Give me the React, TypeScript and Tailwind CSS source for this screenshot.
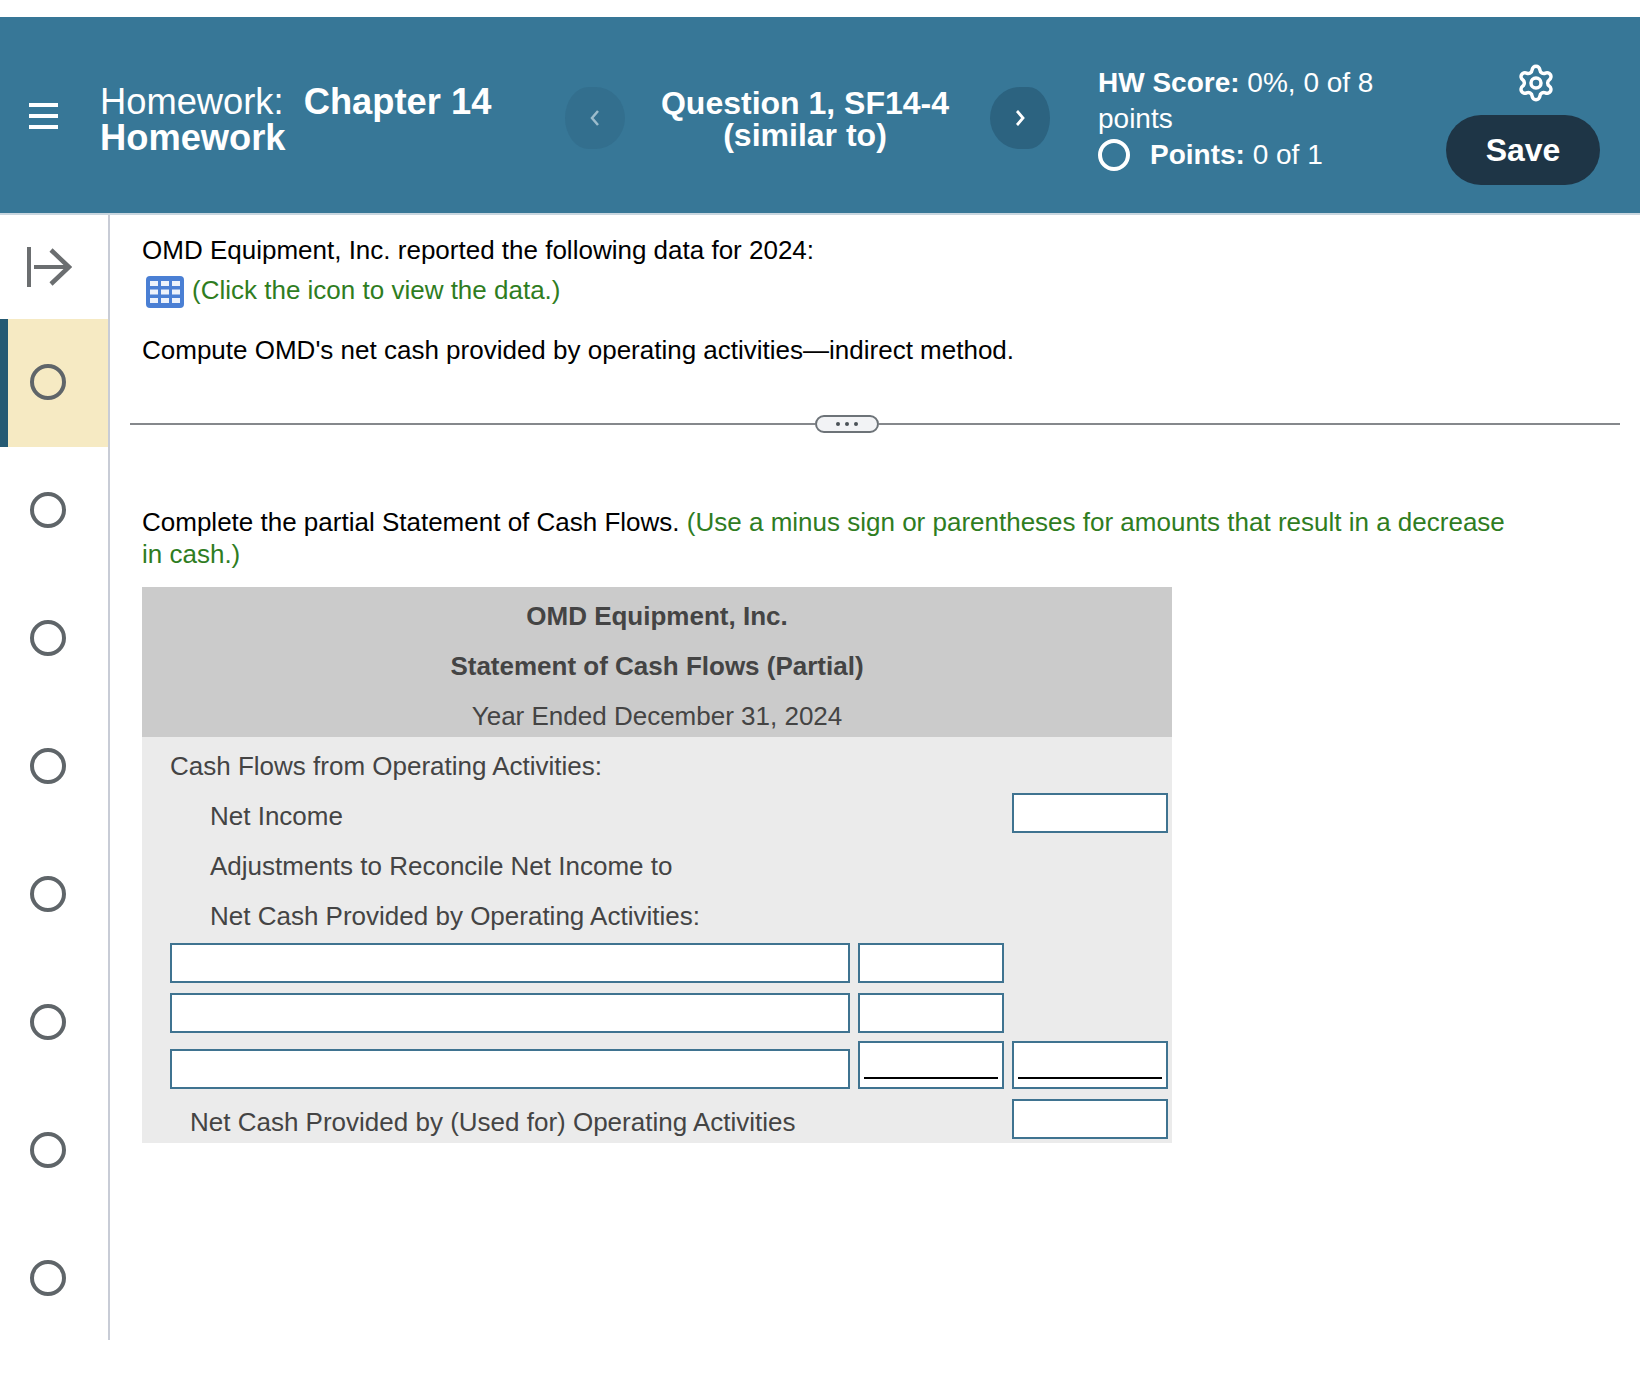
import { Settings } from "lucide-react";

const fontClass = "font-['Liberation_Sans',Arial,sans-serif]";

function Circle() {
  return <div className="mb-[2px] h-[36px] w-[36px] rounded-full border-[4px] border-[#5f6569]" />;
}

function Box({ className }: { className: string }) {
  return <div className={`box-border border-2 border-[#3f7390] bg-white ${className}`} />;
}

function UnderlinedBox({ className }: { className: string }) {
  return (
    <div className={`box-border flex h-[48px] items-end border-2 border-[#3f7390] bg-white px-[4px] pb-[8px] ${className}`}>
      <div className="h-[2px] w-full bg-black" />
    </div>
  );
}

function TableLine({ text, indent }: { text: string; indent: string }) {
  return <div className={`flex h-[50px] items-center ${indent}`}>{text}</div>;
}

export default function App() {
  return (
    <div className={`min-h-[1384px] bg-white pt-[17px] ${fontClass}`}>
      <header className="flex h-[198px] items-start border-b-2 border-[#c9d6df] bg-[#377797] text-white">
        <div className="mt-[86px] flex w-[100px] justify-start pl-[29px]">
          <div className="flex w-[29px] flex-col gap-[7px]">
            <div className="h-[4px] bg-white" />
            <div className="h-[4px] bg-white" />
            <div className="h-[4px] bg-white" />
          </div>
        </div>
        <div className="mt-[67px] w-[465px] text-[36.3px] leading-[36px]">
          Homework:&nbsp; <span className="font-bold">Chapter 14 Homework</span>
        </div>
        <div className="mt-[70px] flex h-[62px] w-[60px] items-center justify-center rounded-[24px_30px_30px_24px/31px] bg-[#336f8e] text-[#9dbccc]">
          <svg width="12" height="18" viewBox="0 0 12 18" fill="none" stroke="currentColor" strokeWidth="2.5">
            <path d="M9 2 3 9l6 7" />
          </svg>
        </div>
        <div className="mt-[70px] w-[360px] text-center text-[32px] font-bold leading-[32px]">
          Question 1, SF14-4
          <br />
          (similar to)
        </div>
        <div className="ml-[5px] mt-[70px] flex h-[62px] w-[60px] items-center justify-center rounded-[30px_22px_22px_30px/31px] bg-[#2c6380]">
          <svg width="12" height="18" viewBox="0 0 12 18" fill="none" stroke="white" strokeWidth="2.8">
            <path d="M3 2l6 7-6 7" />
          </svg>
        </div>
        <div className="ml-[48px] mt-[48px] w-[348px] text-[28px] leading-[36px]">
          <div className="w-[300px]">
            <span className="font-bold">HW Score:</span> 0%, 0 of 8 points
          </div>
          <div className="flex items-center gap-[20px]">
            <div className="h-[32px] w-[32px] rounded-full border-[4px] border-white" />
            <div>
              <span className="font-bold">Points:</span> 0 of 1
            </div>
          </div>
        </div>
        <div className="flex w-[154px] flex-col items-center pt-[46px]">
          <Settings className="ml-[26px]" size={40} strokeWidth={2.1} />
          <div className="mt-[12px] flex h-[70px] w-[154px] items-center justify-center rounded-full bg-[#1e3546] text-[32px] font-bold">
            Save
          </div>
        </div>
      </header>

      <div className="flex">
        <aside className="box-border h-[1125px] w-[110px] shrink-0 border-r-2 border-[#c8ccd6]">
          <div className="flex h-[104px] items-start pl-[26px] pt-[32px]">
            <svg width="46" height="42" viewBox="0 0 46 42" fill="none" stroke="#6b6e70">
              <path d="M3 0v40" strokeWidth="4" />
              <path d="M8 20h34" strokeWidth="4" />
              <path d="M25 3l18 17-18 17" strokeWidth="4.5" />
            </svg>
          </div>
          <div className="flex h-[128px] items-center border-l-[8px] border-[#255a73] bg-[#f6eac3] pl-[22px]">
            <Circle />
          </div>
          {[0, 1, 2, 3, 4, 5, 6].map((i) => (
            <div key={i} className="flex h-[128px] items-center pl-[30px]">
              <Circle />
            </div>
          ))}
        </aside>

        <main className="min-w-0 flex-1 pt-[16px] text-[26px] text-black">
          <div className="pl-[32px]">
            <p className="leading-[38px]">OMD Equipment, Inc. reported the following data for 2024:</p>
            <p className="flex h-[42px] items-center leading-[38px] text-[#2f7d1f]">
              <svg className="ml-[4px] mr-[8px] mt-[4px]" width="38" height="32" viewBox="0 0 38 32">
                <rect width="38" height="32" rx="4" fill="#4a7fd4" />
                {[5, 13.5, 22].map((y) =>
                  [4, 15, 26].map((x) => <rect key={`${x}-${y}`} x={x} y={y} width="8" height="5" fill="white" opacity="0.9" />)
                )}
              </svg>
              (Click the icon to view the data.)
            </p>
            <p className="mt-[20px] leading-[38px]">Compute OMD's net cash provided by operating activities—indirect method.</p>
          </div>

          <div className="ml-[20px] mr-[20px] mt-[46px] flex items-center">
            <div className="h-[2px] w-[685px] bg-[#85888c]" />
            <div className="flex h-[18px] w-[64px] items-center justify-center gap-[5px] rounded-full border-2 border-[#6d7378] bg-[#f2f3f5]">
              <div className="h-[4px] w-[4px] rounded-full bg-[#4b5257]" />
              <div className="h-[4px] w-[4px] rounded-full bg-[#4b5257]" />
              <div className="h-[4px] w-[4px] rounded-full bg-[#4b5257]" />
            </div>
            <div className="h-[2px] flex-1 bg-[#85888c]" />
          </div>

          <div className="pl-[32px] pt-[73px]">
            <p className="w-[1370px] leading-[32px]">
              Complete the partial Statement of Cash Flows.{" "}
              <span className="text-[#2f7d1f]">(Use a minus sign or parentheses for amounts that result in a decrease in cash.)</span>
            </p>
            <div className="mt-[17px] w-[1030px] text-[#444]">
              <div className="h-[150px] bg-[#cbcbcb] text-center leading-[50px]">
                <div className="h-[50px] pt-[4px] font-bold">OMD Equipment, Inc.</div>
                <div className="h-[50px] pt-[4px] font-bold">Statement of Cash Flows (Partial)</div>
                <div className="h-[50px] pt-[4px]">Year Ended December 31, 2024</div>
              </div>
              <div className="h-[406px] bg-[#ebebeb] pr-[4px] pt-[4px]">
                <TableLine text="Cash Flows from Operating Activities:" indent="pl-[28px]" />
                <div className="flex h-[50px] items-center justify-between pl-[68px]">
                  <span>Net Income</span>
                  <Box className="mb-[6px] h-[40px] w-[156px]" />
                </div>
                <TableLine text="Adjustments to Reconcile Net Income to" indent="pl-[68px]" />
                <TableLine text="Net Cash Provided by Operating Activities:" indent="pl-[68px]" />
                <div className="mt-[2px] flex gap-[8px] pl-[28px]">
                  <Box className="h-[40px] w-[680px]" />
                  <Box className="h-[40px] w-[146px]" />
                </div>
                <div className="mt-[10px] flex gap-[8px] pl-[28px]">
                  <Box className="h-[40px] w-[680px]" />
                  <Box className="h-[40px] w-[146px]" />
                </div>
                <div className="mt-[8px] flex items-end gap-[8px] pl-[28px]">
                  <Box className="h-[40px] w-[680px]" />
                  <UnderlinedBox className="w-[146px]" />
                  <UnderlinedBox className="w-[156px]" />
                </div>
                <div className="mt-[10px] flex h-[40px] items-center justify-between pl-[48px]">
                  <span className="pt-[6px]">Net Cash Provided by (Used for) Operating Activities</span>
                  <Box className="h-[40px] w-[156px]" />
                </div>
              </div>
            </div>
          </div>
        </main>
      </div>
    </div>
  );
}
